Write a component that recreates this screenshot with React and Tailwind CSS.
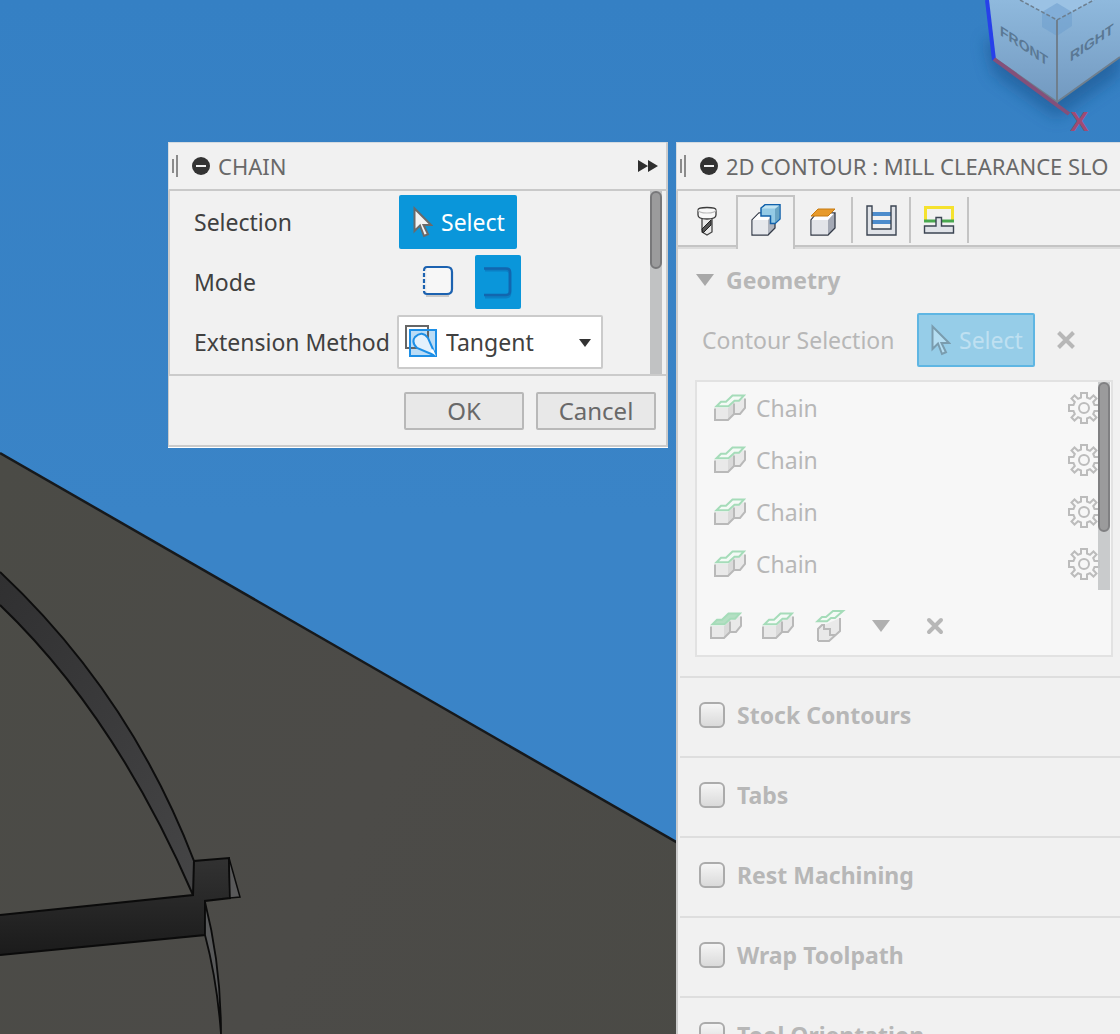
import { useState } from 'react';
import clsx from 'clsx';

const bodyFont = "font-['Noto_Sans','Open_Sans',sans-serif]";

const sections = ['Stock Contours', 'Tabs', 'Rest Machining', 'Wrap Toolpath', 'Tool Orientation'];

const Scene = () => (
  <svg
    className="absolute inset-0 w-full h-full"
    viewBox="0 0 1120 1034"
    preserveAspectRatio="xMinYMin slice"
    aria-hidden="true"
  >
    <defs>
      <linearGradient id="sky" x1="0" y1="0" x2="0" y2="1">
        <stop offset="0" stopColor="#3580c4" />
        <stop offset="0.5" stopColor="#3a84c7" />
        <stop offset="1" stopColor="#3a84c8" />
      </linearGradient>
      <linearGradient id="stock" x1="0" y1="0" x2="1" y2="0.3">
        <stop offset="0" stopColor="#4b4b46" />
        <stop offset="0.5" stopColor="#4c4b48" />
        <stop offset="1" stopColor="#4a4a45" />
      </linearGradient>
      <linearGradient id="slot" x1="0" y1="0" x2="0" y2="1">
        <stop offset="0" stopColor="#323232" />
        <stop offset="1" stopColor="#1b1b1b" />
      </linearGradient>
      <linearGradient id="wall" x1="0" y1="0" x2="1" y2="1">
        <stop offset="0" stopColor="#303031" />
        <stop offset="1" stopColor="#454546" />
      </linearGradient>
      <linearGradient id="cube" x1="0" y1="0" x2="0" y2="1">
        <stop offset="0" stopColor="#8fb9dd" />
        <stop offset="1" stopColor="#7299c0" />
      </linearGradient>
      <filter id="soft" x="-30%" y="-30%" width="160%" height="160%">
        <feGaussianBlur stdDeviation="8" />
      </filter>
    </defs>

    <rect width="1120" height="1034" fill="url(#sky)" />

    {/* stock body */}
    <path d="M0 453 L1010 1034 L0 1034 Z" fill="url(#stock)" />
    <path d="M0 453 L1010 1034" stroke="#17191b" strokeWidth="2.5" />
    <path d="M0 572 Q130 694 194 861 L193 895 Q115 715 0 605 Z" fill="url(#wall)" />
    <path d="M0 572 Q130 694 194 861 V895 M0 605 Q115 715 193 895" fill="none" stroke="#0d0d0d" strokeWidth="2" />
    <path d="M0 915 L193 895 L194 861 L229 858 L230 898 L205 901 L205 935 L0 955 Z" fill="url(#slot)" />
    <path d="M0 915 L193 895 L194 861 L229 858 L230 898 L205 901 L205 935 L0 955" fill="none" stroke="#0b0b0b" strokeWidth="2" />
    <path d="M229 858 L240 897 L230 898 Z" fill="#59595a" stroke="#0b0b0b" strokeWidth="1.5" />
    <path d="M205 902 Q221 965 221 1034 Q217 980 205 935 Z" fill="#58595a" stroke="#0b0b0b" strokeWidth="1.8" />

    {/* view cube */}
    <path d="M985 40 L994 74 L1057 118 L1120 74 V40 Z" fill="#164f87" opacity="0.55" filter="url(#soft)" />
    <path d="M988 0 L994 58 L1057 102 L1120 57 V0 Z" fill="url(#cube)" />
    <path d="M1020 0 L1057 20 L1094 0 Z" fill="#9bc2e4" />
    <path d="M1042 12 L1057 3 L1072 12 V26 L1057 36 L1042 27 Z" fill="#6d9fce" opacity="0.55" />
    <path d="M1020 0 L1057 20 L1094 0" fill="none" stroke="#6d7f8f" strokeWidth="1.5" strokeDasharray="4 2" />
    <path d="M994 58 L1057 102 V20 M1057 102 L1120 57" fill="none" stroke="#6f7f8e" strokeWidth="2" />
    <path d="M987 0 L994 60" stroke="#2740ea" strokeWidth="4" />
    <path d="M994 59 L1069 114" stroke="#84507a" strokeWidth="4" />
    <g className="font-['Liberation_Sans',Arial,sans-serif]" fontSize="14" fontWeight="700">
      <text x="1000" y="35" transform="translate(1000 35) skewY(33) translate(-1000 -35)" fill="#5a7894">FRONT</text>
      <text x="1070" y="62" transform="translate(1070 62) skewY(-34) translate(-1070 -62)" fill="#5a7894">RIGHT</text>
      <text x="1070" y="131" fontSize="28" fill="#a04b72">X</text>
    </g>
  </svg>
);

const GripIcon = () => (
  <svg className="shrink-0" width="8" height="24" viewBox="0 0 8 24" aria-hidden="true">
    <path d="M1 5h2v14H1z M5 1h2v22H5z" fill="#8b8b8b" />
  </svg>
);

const CollapseIcon = () => (
  <svg className="shrink-0" width="18" height="18" viewBox="0 0 18 18" aria-hidden="true">
    <circle cx="9" cy="9" r="9" fill="#333" />
    <path d="M4 8h10v2H4z" fill="#f1f1f1" />
  </svg>
);

const CursorIcon = ({ faded }) => (
  <svg width="20" height="32" viewBox="0 0 20 32" aria-hidden="true">
    <path
      d="M1.500 2.500 V25 L7 19.500 L11 30 L15 28.200 L10.500 19 H18 Z"
      fill={faded ? '#b5def2' : '#f3f3f3'}
      stroke={faded ? '#7a9cae' : '#6a6a6a'}
      strokeWidth="2"
    />
  </svg>
);

const ClosedChainIcon = () => (
  <svg width="34" height="34" viewBox="0 0 34 34" aria-hidden="true">
    <path d="M5 31 H28" stroke="#c9c9c9" strokeWidth="2" />
    <path d="M6 2 H26 Q31 2 31 7 V24 Q31 29 26 29 H6" fill="#f7f7f7" stroke="#1c62b0" strokeWidth="2.200" />
    <path d="M6 2 Q3 2 3 6 M3 8v4 M3 14v4 M3 20v4 M3 26 Q3 29 6 29" fill="none" stroke="#1c62b0" strokeWidth="2.200" />
  </svg>
);

const OpenChainIcon = () => (
  <svg width="34" height="34" viewBox="0 0 34 34" aria-hidden="true">
    <path d="M4 5 H25 Q29 5 29 9 V27 Q29 32 25 32 H4" fill="none" stroke="#0b7fc4" strokeWidth="3" />
    <path d="M3 3.500 H25 Q29 3.500 29 7 V26 Q29 30 25 30 H3" fill="none" stroke="#1266ae" strokeWidth="2.500" />
  </svg>
);

const TangentIcon = () => (
  <svg width="32" height="32" viewBox="0 0 32 32" aria-hidden="true">
    <rect x="5" y="5" width="26" height="26" fill="#badcf6" />
    <rect x="1" y="1" width="22" height="22" fill="none" stroke="#666" strokeWidth="2" />
    <rect x="5" y="5" width="26" height="26" fill="none" stroke="#1d8fe6" strokeWidth="2" />
    <path d="M31 31 L12 23 Q6 17 10 12 Q17 5 23 13 Z" fill="#e4f1fc" stroke="#1d8fe6" strokeWidth="2" />
    <path d="M25 26 L31 31 L28 24 Z" fill="#fff" />
  </svg>
);

const ToolIcon = () => (
  <svg width="32" height="32" viewBox="0 0 32 32" aria-hidden="true">
    <path d="M11 13 V28 L16 31 L21 28 V13 Z" fill="#e9e9e9" stroke="#444" strokeWidth="1.300" />
    <path d="M11 25 L20 16 V21 L12 29 Z" fill="#555" stroke="#222" strokeWidth="1" />
    <path d="M7 6 Q7 3.500 16 3.500 Q25 3.500 25 6 V11 Q25 15 16 15 Q7 15 7 11 Z" fill="#f8f8f8" stroke="#3c3c3c" strokeWidth="1.300" />
    <path d="M7 6 Q8 9 16 9 Q24 9 25 6" fill="none" stroke="#bbb" strokeWidth="1.200" />
  </svg>
);

const GeometryIcon = () => (
  <svg width="32" height="32" viewBox="0 0 32 32" aria-hidden="true">
    <path d="M2 16 L9 9 H25 V24 L18 31 H2 Z" fill="#aeb3bd" stroke="#343b48" strokeWidth="1.300" />
    <path d="M2.600 16 L9 9.600 H24 L18 16 Z" fill="#fff" />
    <path d="M2.600 16 H18 V30.400 H2.600 Z" fill="#e6e8ec" />
    <path d="M11 4 L15 0.800 H30 V15 L25 19.500 H20.500 V12 H11 Z" fill="#94cae5" stroke="#1261ab" strokeWidth="1.500" />
    <path d="M25 5 L29.300 1.500 V14.500 L25 18.800 Z" fill="#6aa5c4" />
    <path d="M12 4.500 L15.500 1.600 H29 L25 4.500 Z" fill="#c2e4f2" />
  </svg>
);

const HeightsIcon = () => (
  <svg width="32" height="32" viewBox="0 0 32 32" aria-hidden="true">
    <path d="M4 16 L10 9 H28 V24 L21 31 H4 Z" fill="#a4a9b5" stroke="#343b48" strokeWidth="1.300" />
    <path d="M4.600 16 L10 9.600 H27 L21 16 Z" fill="#fff" />
    <path d="M4.600 16 H21 V30.400 H4.600 Z" fill="#e2e4e9" />
    <path d="M4 12 L11 5 H28 L21 12 Z" fill="#e79a2b" stroke="#c77a10" strokeWidth="1" />
  </svg>
);

const PassesIcon = () => (
  <svg width="32" height="32" viewBox="0 0 32 32" aria-hidden="true">
    <path d="M6 8h20v4H6z M6 16h20v4H6z" fill="#4d8ccc" />
    <path d="M2 2 H7 V25 H26 V2 H31 V31 H2 Z" fill="#e0e3e8" stroke="#3b4452" strokeWidth="1.400" />
  </svg>
);

const LinkingIcon = () => (
  <svg width="32" height="32" viewBox="0 0 32 32" aria-hidden="true">
    <path d="M2.500 17 V3.500 H29.500 V17" fill="none" stroke="#f5e22e" strokeWidth="3" />
    <path d="M1 15.500h30v3H1z" fill="#49a84f" />
    <path d="M1.500 22 H13 V13.500 H18.500 V22 H30.500 V29 H1.500 Z" fill="#e0e3e8" stroke="#3b4452" strokeWidth="1.400" />
  </svg>
);

const ChainIcon = ({ filled }) => (
  <svg className="shrink-0" width="32" height="28" viewBox="0 0 32 28" aria-hidden="true">
    <path d="M1 14 V26 H14 L20 20 H26 L31 14 V4 L20 8 L15 14 Z" fill="#e9e9e9" />
    <path d="M14 14 L20 9 V20 L14 26 Z" fill="#dadada" />
    <path d="M1 14.500 V26 H14 L20 20 H26 L31 14 V4.500 M20 9.500 V20" fill="none" stroke="#b9b9b9" strokeWidth="2" />
    <path
      d="M2.500 12.200 L7 7.700 H12 L18.500 1.500 H30 L25 6.700 H20.500 L14.500 12.200 Z"
      fill={filled ? '#b4dfc3' : '#f4faf6'}
      stroke="#a5dcb9"
      strokeWidth="2"
    />
  </svg>
);

const PocketIcon = () => (
  <svg width="32" height="32" viewBox="0 0 32 32" aria-hidden="true">
    <path d="M4 19 L8 15 H10 L26 8 V21 L15 31 H4 Z" fill="#e9e9e9" />
    <path d="M4 31 V19 L8 15 H10 V19 H16 V25 H21 M4 31 H15 L26 21 V8" fill="none" stroke="#b9b9b9" strokeWidth="2" />
    <path d="M3.500 11.200 L8 7 H12 L19 1 H29 L21 8 H17 L13 11.200 Z" fill="#f4faf6" stroke="#a5dcb9" strokeWidth="2" />
  </svg>
);

const GearIcon = () => (
  <svg width="32" height="32" viewBox="0 0 32 32" aria-hidden="true">
    <path
      d="M13 1 H19 V5.500 L22 6.800 L25.500 3.500 L28.500 6.500 L25.200 10 L26.500 13 H31 V19 H26.500 L25.200 22 L28.500 25.500 L25.500 28.500 L22 25.200 L19 26.500 V31 H13 V26.500 L10 25.200 L6.500 28.500 L3.500 25.500 L6.800 22 L5.500 19 H1 V13 H5.500 L6.800 10 L3.500 6.500 L6.500 3.500 L10 6.800 L13 5.500 Z"
      fill="none"
      stroke="#bcbcbc"
      strokeWidth="2"
    />
    <circle cx="16" cy="16" r="5" fill="none" stroke="#bcbcbc" strokeWidth="2" />
  </svg>
);

const CrossIcon = ({ round }) => (
  <svg width="18" height="18" viewBox="0 0 18 18" aria-hidden="true">
    <path
      d={round ? 'M3 3 L15 15 M15 3 L3 15' : 'M1.500 1.500 L16.500 16.500 M16.500 1.500 L1.500 16.500'}
      stroke="#b7b7b7"
      strokeWidth="4"
      strokeLinecap={round ? 'round' : 'butt'}
    />
  </svg>
);

const DownIcon = ({ color = '#b0b0b0' }) => (
  <svg width="18" height="12" viewBox="0 0 18 12" aria-hidden="true">
    <path d="M0 0 H18 L9 12 Z" fill={color} />
  </svg>
);

const tabs = [
  { name: 'Tool', Icon: ToolIcon },
  { name: 'Geometry', Icon: GeometryIcon },
  { name: 'Heights', Icon: HeightsIcon, divider: true },
  { name: 'Passes', Icon: PassesIcon, divider: true },
  { name: 'Linking', Icon: LinkingIcon, divider: true },
];

const PanelHeader = ({ title, children }) => (
  <header className="flex items-center h-[49px] pl-0.5 border-t border-b-2 border-l border-t-[#d5dbe0] border-l-[#d5dbe0] border-b-[#c9c9c9]">
    <GripIcon />
    <button type="button" aria-label="Collapse" className="ml-[13px] shrink-0">
      <CollapseIcon />
    </button>
    <h2 className="ml-2 text-[22px] text-[#696969] whitespace-nowrap">{title}</h2>
    {children}
  </header>
);

const ChainDialog = () => {
  const [mode, setMode] = useState('open');
  const [method, setMethod] = useState('Tangent');

  return (
    <section className="w-[500px] shrink-0 bg-[#f1f1f1] border-b border-white text-[23px] text-[#404040]">
      <div className="border-r-2 border-[#cdcdcd]">
        <PanelHeader title="CHAIN">
          <button type="button" aria-label="Expand" className="ml-auto mr-2">
            <svg width="20" height="12" viewBox="0 0 20 12" aria-hidden="true">
              <path d="M0 0 L10 6 L0 12 Z M10 0 L20 6 L10 12 Z" fill="#2f2f2f" />
            </svg>
          </button>
        </PanelHeader>
      </div>

      <div className="flex border-x-2 border-b-2 border-[#cbcbcb]">
        <div className="flex-1 pl-6 pt-px pb-0.5">
          <div className="flex items-center h-15">
            <span className="w-[205px]">Selection</span>
            <button type="button" className="flex items-center gap-2 h-[54px] w-[118px] pl-3.5 rounded-xs bg-[#0a96da] text-white">
              <CursorIcon />
              <span>Select</span>
            </button>
          </div>
          <div className="flex items-center h-15">
            <span className="w-[205px]">Mode</span>
            <div className="flex gap-3.5 pl-4">
              <button
                type="button"
                aria-label="Closed"
                onClick={() => setMode('closed')}
                className={clsx('flex items-center justify-center h-[54px] w-[46px] rounded-xs', mode === 'closed' && 'bg-[#0a96da]')}
              >
                <ClosedChainIcon />
              </button>
              <button
                type="button"
                aria-label="Open"
                onClick={() => setMode('open')}
                className={clsx('flex items-center justify-center h-[54px] w-[46px] rounded-xs', mode === 'open' && 'bg-[#0a96da]')}
              >
                <OpenChainIcon />
              </button>
            </div>
          </div>
          <div className="flex items-center h-15">
            <label htmlFor="method" className="w-[203px] whitespace-nowrap">Extension Method</label>
            <div className="relative">
              <select
                id="method"
                value={method}
                onChange={(e) => setMethod(e.target.value)}
                className="appearance-none w-[206px] h-[54px] pl-[47px] pr-10 rounded-xs border-2 border-[#cbcbcb] bg-white"
              >
                <option>Tangent</option>
              </select>
              <span className="absolute left-2 top-2.5 pointer-events-none">
                <TangentIcon />
              </span>
              <svg className="absolute right-3 top-6 pointer-events-none" width="12" height="8" viewBox="0 0 12 8" aria-hidden="true">
                <path d="M0 0 H12 L6 8 Z" fill="#333" />
              </svg>
            </div>
          </div>
        </div>
        <div className="w-3 mr-1 bg-[#c1c2c3]">
          <div className="h-[78px] rounded-full bg-[#9b9b9c] border-2 border-[#78787a]" />
        </div>
      </div>

      <footer className="flex justify-end gap-3 pt-4 pb-[15px] pr-2.5 border-r-2 border-b-2 border-l border-[#cbcbcb] text-2xl text-[#696969]">
        <button type="button" className="w-30 h-[38px] leading-8 rounded-xs border-2 border-[#b8b8b8] bg-[#e8e8e8]">OK</button>
        <button type="button" className="w-30 h-[38px] leading-8 rounded-xs border-2 border-[#b8b8b8] bg-[#e8e8e8]">Cancel</button>
      </footer>
    </section>
  );
};

const ContourPanel = () => {
  const [tab, setTab] = useState('Geometry');

  return (
    <section className="flex-1 min-w-0 overflow-hidden bg-[#f1f1f1] text-[23px] text-[#b7b7b7]">
      <PanelHeader title="2D CONTOUR : MILL CLEARANCE SLO" />

      <div className="border-l-2 border-[#cbcbcb]">
        <nav className="flex h-[58px] pt-1">
          {tabs.map(({ name, Icon, divider }) => (
            <button
              key={name}
              type="button"
              aria-label={name}
              onClick={() => setTab(name)}
              className={clsx(
                'flex shrink-0',
                tab === name
                  ? 'w-[59px] border-2 border-b-0 border-[#c4c4c4]'
                  : 'w-[58px] border-b-2 border-[#c4c4c4] shadow-[0_2px_0_#dcdcdc] mb-0.5'
              )}
            >
              <span
                className={clsx(
                  'flex flex-1 items-center justify-center h-[46px] border-[#c4c4c4]',
                  tab !== name && 'mt-0.5',
                  divider && 'border-r-2'
                )}
              >
                <Icon />
              </span>
            </button>
          ))}
          <div className="flex-1 border-b-2 border-[#c4c4c4] shadow-[0_2px_0_#dcdcdc] mb-0.5" />
        </nav>

        <fieldset disabled className="pt-px">
          <div className="flex items-center h-15 gap-3 pl-[18px]">
            <DownIcon color="#a8a8a8" />
            <h3 className="font-bold">Geometry</h3>
          </div>
          <div className="flex items-center h-15 pl-6">
            <span className="w-[215px] whitespace-nowrap">Contour Selection</span>
            <button type="button" className="flex items-center gap-2 h-[54px] w-[118px] pl-3 rounded-xs border-2 border-[#5fb6e3] bg-[#96cde8] text-[#bfe0f1]">
              <CursorIcon faded />
              <span>Select</span>
            </button>
            <button type="button" aria-label="Clear selection" className="ml-[22px]">
              <CrossIcon />
            </button>
          </div>

          <div className="mt-2.5 ml-[17px] mr-[7px] border-2 border-[#e2e2e2] bg-[#f7f7f7]">
            <div className="relative">
              <ul className="pl-[17px] pr-[11px]">
                {[1, 2, 3, 4].map((n) => (
                  <li key={n} className="flex items-center h-[52px]">
                    <ChainIcon />
                    <span className="ml-2.5">Chain</span>
                    <button type="button" aria-label="Chain settings" className="ml-auto">
                      <GearIcon />
                    </button>
                  </li>
                ))}
              </ul>
              <div className="absolute right-px inset-y-0 w-3 bg-[#c3c5c6]/90">
                <div className="h-[150px] rounded-full bg-[#9b9b9c] border-2 border-[#808082]" />
              </div>
            </div>
            <div className="flex items-center h-[65px] pt-1.5 gap-5 pl-[13px]">
              <button type="button" aria-label="Add face"><ChainIcon filled /></button>
              <button type="button" aria-label="Add chain"><ChainIcon /></button>
              <button type="button" aria-label="Add pocket"><PocketIcon /></button>
              <button type="button" aria-label="More" className="ml-1.5"><DownIcon /></button>
              <button type="button" aria-label="Remove" className="ml-4"><CrossIcon round /></button>
            </div>
          </div>

          <div className="mt-[19px] ml-0.5">
            {sections.map((s) => (
              <label key={s} className="flex items-center h-20 pb-1 gap-3 pl-[19px] border-t-2 border-[#dedede] font-bold whitespace-nowrap">
                <input
                  type="checkbox"
                  className="appearance-none size-[26px] shrink-0 rounded-md border-2 border-[#ababab] bg-linear-to-b from-[#f5f5f5] to-[#dadada]"
                />
                {s}
              </label>
            ))}
          </div>
        </fieldset>
      </div>
    </section>
  );
};

const App = () => (
  <main className={clsx(bodyFont, 'relative h-screen overflow-hidden')}>
    <Scene />
    <div className="relative flex items-start gap-2 pt-[142px] pl-42">
      <ChainDialog />
      <ContourPanel />
    </div>
  </main>
);

export default App;
